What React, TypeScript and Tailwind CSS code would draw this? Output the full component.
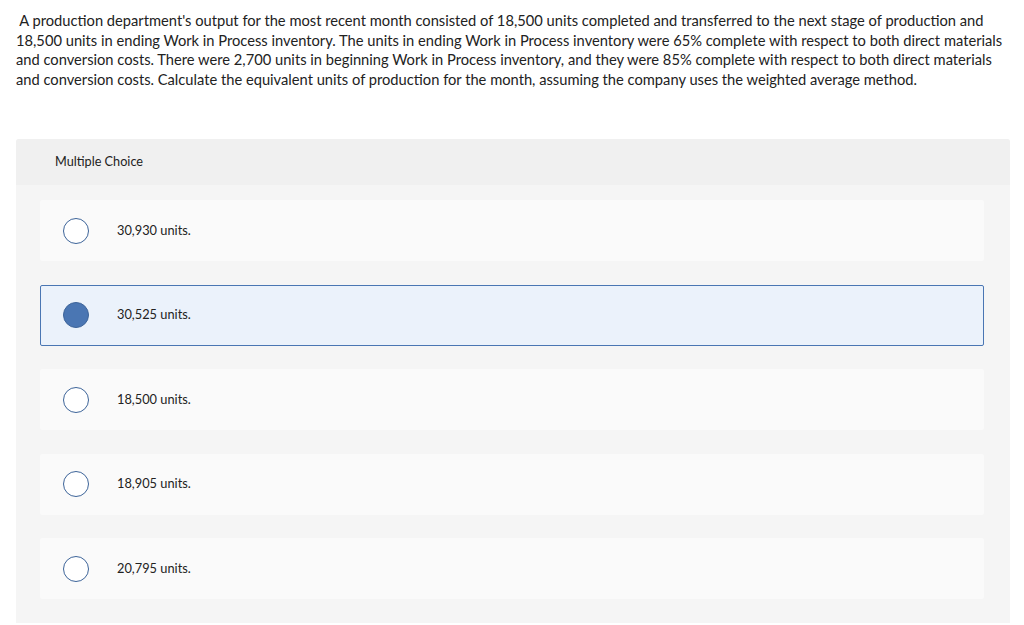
const options = [
  { label: "30,930 units.", selected: false },
  { label: "30,525 units.", selected: true },
  { label: "18,500 units.", selected: false },
  { label: "18,905 units.", selected: false },
  { label: "20,795 units.", selected: false },
]

export default function App() {
  return (
    <div className="min-h-screen bg-white text-[#222] font-['Lato',sans-serif]">
      <p className="pl-4 pt-[11px] text-[14.7px] leading-[19.5px] whitespace-nowrap">
        &nbsp;A production department's output for the most recent month consisted of 18,500 units completed and transferred to the next stage of production and
        <br />
        18,500 units in ending Work in Process inventory. The units in ending Work in Process inventory were 65% complete with respect to both direct materials
        <br />
        and conversion costs. There were 2,700 units in beginning Work in Process inventory, and they were 85% complete with respect to both direct materials
        <br />
        and conversion costs. Calculate the equivalent units of production for the month, assuming the company uses the weighted average method.
      </p>

      <div className="ml-4 w-[994px] mt-[50px] bg-[#f5f5f5] rounded-t-[3px] pb-6">
        <div className="h-[46px] bg-[#f0f0f0] rounded-t-[3px] flex items-center pl-[39px] text-[12.7px]">
          Multiple Choice
        </div>
        <div className="flex flex-col gap-[23.5px] pl-6 pr-[26px] pt-[15px]">
          {options.map((o) => (
            <div
              key={o.label}
              className={
                o.selected
                  ? "h-[61px] flex items-center rounded-[2px] border border-[#4a76b3] bg-[#ebf2fb]"
                  : "h-[61px] flex items-center rounded-[2px] border border-transparent bg-[#fafafa]"
              }
            >
              <span
                className={
                  o.selected
                    ? "ml-[22px] w-[26px] h-[26px] rounded-full border border-[#3d6499] bg-[#4a76b3]"
                    : "ml-[22px] w-[26px] h-[26px] rounded-full border border-[#3d6499] bg-white"
                }
              />
              <span className="ml-[28px] text-[12.8px]">{o.label}</span>
            </div>
          ))}
        </div>
      </div>
    </div>
  )
}
